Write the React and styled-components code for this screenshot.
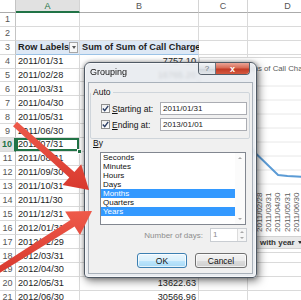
import React from 'react';
import styled, { createGlobalStyle } from 'styled-components';

const GlobalStyle = createGlobalStyle`
  html, body { margin: 0; padding: 0; background: #fff; }
  body { font-family: "Liberation Sans", Arial, sans-serif; overflow: hidden; }
  * { box-sizing: border-box; }
`;

const Page = styled.div`
  position: relative;
  width: 301px;
  height: 300px;
  overflow: hidden;
  background: #fff;
`;

/* ---------- spreadsheet ---------- */
const Sheet = styled.div`
  display: grid;
  grid-template-columns: 16px 64px 119px 49px 80px;
  grid-template-rows: 13px repeat(21, 13.9px);
  font-size: 9.2px;
  color: #1e1e1e;
`;

const Corner = styled.div`
  background: #fff;
  border-right: 1px solid #c4c4c4;
  border-bottom: 1px solid #ababab;
`;

const ColHead = styled.div`
  display: flex;
  align-items: center;
  justify-content: center;
  font-size: 9px;
  color: ${p => (p.$active ? '#217346' : '#555')};
  background: ${p => (p.$active ? '#e1e1e1' : '#fff')};
  border-right: 1px solid #d4d4d4;
  border-bottom: ${p => (p.$active ? '2px solid #217346' : '1px solid #ababab')};
`;

const RowHead = styled.div`
  display: flex;
  align-items: center;
  justify-content: center;
  font-size: 9px;
  color: ${p => (p.$active ? '#217346' : '#555')};
  font-weight: ${p => (p.$active ? 700 : 400)};
  background: ${p => (p.$active ? '#e1e1e1' : '#fff')};
  border-right: ${p => (p.$active ? '2px solid #217346' : '1px solid #c4c4c4')};
  border-bottom: 1px solid #dadada;
`;

const Cell = styled.div`
  position: relative;
  display: flex;
  align-items: center;
  justify-content: ${p => (p.$right ? 'flex-end' : 'flex-start')};
  padding: 0 2px;
  white-space: nowrap;
  font-weight: ${p => (p.$pivot ? 700 : 400)};
  background: ${p => (p.$pivot ? '#dde8f5' : '#fff')};
  border-right: 1px solid #dadada;
  border-bottom: ${p => (p.$pivot ? '1px solid #9bc2e6' : '1px solid #dadada')};
  box-shadow: ${p => (p.$selected ? 'inset 0 0 0 2px #217346' : 'none')};
`;

const FilterButton = styled.span`
  margin-left: auto;
  margin-right: -1px;
  width: 11px;
  height: 11px;
  border: 1px solid #a6a6a6;
  background: #f7f7f7;
  display: flex;
  align-items: center;
  justify-content: center;
  &::after {
    content: '';
    border-top: 3px solid #555;
    border-left: 2.5px solid transparent;
    border-right: 2.5px solid transparent;
  }
`;

const FillHandle = styled.span`
  position: absolute;
  right: -3px;
  bottom: -3px;
  width: 5px;
  height: 5px;
  background: #217346;
  border: 1px solid #fff;
  z-index: 1;
`;

/* ---------- chart ---------- */
const Chart = styled.div`
  position: absolute;
  left: 199px;
  top: 57px;
  width: 120px;
  height: 196px;
  background: #fff;
  border: 1px solid #d9d9d9;
  display: flex;
  flex-direction: column;
  z-index: 2;
`;

const ChartTitle = styled.div`
  height: 21px;
  line-height: 21px;
  padding-left: 15px;
  font-size: 7.8px;
  color: #595959;
  white-space: nowrap;
`;

const Plot = styled.svg`
  display: block;
  width: 118px;
  height: 108px;
`;

const Ticks = styled.div`
  display: flex;
  height: 47px;
  padding-left: 45.5px;
`;

const Tick = styled.span`
  flex: 0 0 9.3px;
  height: 100%;
  writing-mode: vertical-rl;
  transform: rotate(180deg);
  font-size: 8px;
  line-height: 9.3px;
  color: #595959;
  padding-top: 2px;
  white-space: nowrap;
`;

const FieldButton = styled.div`
  margin: 2px 0 0 56px;
  height: 13px;
  width: 60px;
  display: flex;
  align-items: center;
  gap: 3px;
  padding-left: 3px;
  background: #e9e9e9;
  border: 1px solid #d2d2d2;
  font-size: 8px;
  font-weight: 700;
  color: #333;
  white-space: nowrap;
  &::after {
    content: '';
    border-top: 3px solid #333;
    border-left: 2.5px solid transparent;
    border-right: 2.5px solid transparent;
  }
`;

/* ---------- dialog ---------- */
const Dialog = styled.div`
  position: absolute;
  left: 84px;
  top: 62px;
  width: 173px;
  height: 216px;
  border: 1px solid #4f5964;
  border-radius: 6px 6px 4px 4px;
  background: rgba(230, 234, 239, 0.86);
  backdrop-filter: blur(1.6px);
  box-shadow: inset 0 0 0 1px rgba(255, 255, 255, 0.6), 2px 3px 8px rgba(0, 0, 0, 0.5),
    0 0 4px rgba(0, 0, 0, 0.3);
  display: flex;
  flex-direction: column;
  padding: 0 3px 3px;
  z-index: 3;
  font-family: "Liberation Sans", Arial, sans-serif;
`;

const TitleBar = styled.div`
  height: 19px;
  display: flex;
  align-items: flex-start;
  justify-content: space-between;
  padding-left: 2px;
`;

const Title = styled.span`
  font-size: 9px;
  line-height: 19px;
  color: #111;
`;

const Caption = styled.div`
  display: flex;
  margin-right: 3px;
  height: 12px;
  border: 1px solid #56606b;
  border-top: none;
  border-radius: 0 0 4px 4px;
  overflow: hidden;
`;

const CaptionButton = styled.span`
  width: ${p => (p.$close ? '33px' : '17px')};
  display: flex;
  align-items: center;
  justify-content: center;
  font-size: ${p => (p.$close ? '9px' : '8px')};
  font-weight: ${p => (p.$close ? 700 : 400)};
  color: ${p => (p.$close ? '#fff' : '#6b7580')};
  background: ${p =>
    p.$close
      ? 'linear-gradient(#eaa597 0%, #d86a55 45%, #c23b26 55%, #d4593f 100%)'
      : 'linear-gradient(#f4f6f8 0%, #dde2e7 50%, #cfd5db 51%, #e2e6ea 100%)'};
  border-right: ${p => (p.$close ? 'none' : '1px solid #6a7480')};
`;

const Client = styled.div`
  flex: 1;
  display: flex;
  flex-direction: column;
  background: #f0f0f0;
  border: 1px solid #a9b1ba;
`;

const GroupBox = styled.fieldset`
  margin: 4px 2px 0 1px;
  padding: 0;
  border: 1px solid #cfd5db;
  border-radius: 2px;
  min-width: 0;
`;

const Legend = styled.legend`
  margin-left: 0;
  padding: 0 2px;
  font-size: 8.5px;
  line-height: 10px;
  color: #111;
`;

const GroupRows = styled.div`
  display: flex;
  flex-direction: column;
  gap: 3px;
  padding: 5px 2px 7px 10px;
`;

const FieldRow = styled.div`
  display: flex;
  align-items: center;
  height: 13px;
`;

const CheckBox = styled.span`
  width: 9px;
  height: 9px;
  border: 1px solid #8e8f8f;
  background: linear-gradient(#f0f0f0, #fdfdfd);
  display: flex;
  align-items: center;
  justify-content: center;
`;

const FieldLabel = styled.span`
  flex: 1;
  margin-left: 2px;
  font-size: 8.5px;
  color: #111;
`;

const TextBox = styled.div`
  flex: 0 0 87px;
  height: 13px;
  border: 1px solid #abadb3;
  background: #fff;
  font-size: 8px;
  line-height: 11px;
  padding-left: 2px;
  color: #222;
`;

const ByLabel = styled.div`
  height: 8px;
  line-height: 8px;
  padding-left: 4px;
  font-size: 8.5px;
  color: #111;
`;

const ListBox = styled.div`
  margin: 5px 6px 0 11px;
  height: 73px;
  display: flex;
  border: 1px solid #828790;
  background: #fff;
`;

const Items = styled.div`
  flex: 1;
  display: flex;
  flex-direction: column;
`;

const Item = styled.div`
  height: 9px;
  line-height: 9px;
  padding-left: 2px;
  font-size: 8px;
  color: ${p => (p.$selected ? '#fff' : '#111')};
  background: ${p => (p.$selected ? '#3399ff' : 'transparent')};
`;

const ScrollBar = styled.div`
  flex: 0 0 10px;
  display: flex;
  flex-direction: column;
  justify-content: space-between;
  align-items: center;
  padding: 4px 0;
  background: #fbfbfb;
`;

const Arrow = styled.span`
  border-left: 2.5px solid transparent;
  border-right: 2.5px solid transparent;
  ${p => (p.$down ? 'border-top: 2.5px solid #a8a8a8;' : 'border-bottom: 2.5px solid #a8a8a8;')}
`;

const DaysRow = styled.div`
  margin-top: 3px;
  height: 14px;
  display: flex;
  align-items: center;
  justify-content: flex-end;
  gap: 7px;
  padding-right: 5px;
`;

const DaysLabel = styled.span`
  font-size: 8px;
  color: #8d8d8d;
`;

const SpinBox = styled.div`
  width: 37px;
  height: 14px;
  display: flex;
  border: 1px solid #c9cdd2;
  background: #fff;
`;

const SpinValue = styled.span`
  flex: 1;
  font-size: 8px;
  line-height: 12px;
  padding-left: 2px;
  color: #8d8d8d;
`;

const SpinButtons = styled.span`
  flex: 0 0 9px;
  display: flex;
  flex-direction: column;
  justify-content: space-around;
  align-items: center;
  border-left: 1px solid #dcdcdc;
  background: #f6f6f6;
`;

const ButtonRow = styled.div`
  margin-top: 11px;
  height: 15px;
  display: flex;
  justify-content: flex-end;
  gap: 8px;
  padding-right: 5px;
`;

const Button = styled.div`
  width: ${p => (p.$w)}px;
  height: 15px;
  display: flex;
  align-items: center;
  justify-content: center;
  font-size: 8.5px;
  color: #111;
  border-radius: 3px;
  border: 1px solid ${p => (p.$default ? '#3c7fb1' : '#707070')};
  background: ${p =>
    p.$default
      ? 'linear-gradient(#eaf6fd 0%, #d9f0fc 50%, #bee6fd 51%, #a7d9f5 100%)'
      : 'linear-gradient(#f2f2f2 0%, #ebebeb 50%, #dddddd 51%, #cfcfcf 100%)'};
  box-shadow: inset 0 0 0 1px rgba(255, 255, 255, 0.7);
`;

/* ---------- arrows overlay ---------- */
const Overlay = styled.svg`
  position: absolute;
  left: 0;
  top: 0;
  width: 301px;
  height: 300px;
  pointer-events: none;
  z-index: 5;
`;

function arrowPoints(x0, y0, x1, y1, w = 3.8, h = 14, L = 23) {
  const dx = x1 - x0;
  const dy = y1 - y0;
  const len = Math.hypot(dx, dy);
  const ux = dx / len;
  const uy = dy / len;
  const px = -uy;
  const py = ux;
  const bx = x1 - ux * L;
  const by = y1 - uy * L;
  const pts = [
    [x0 + px * w * 0.8, y0 + py * w * 0.8],
    [bx + px * w, by + py * w],
    [bx + px * h, by + py * h],
    [x1, y1],
    [bx - px * h, by - py * h],
    [bx - px * w, by - py * w],
    [x0 - px * w * 0.8, y0 - py * w * 0.8],
  ];
  return pts.map(p => p.map(v => v.toFixed(1)).join(',')).join(' ');
}

const colA = [
  '', '', 'Row Labels', '2011/01/31', '2011/02/28', '2011/03/31', '2011/04/30', '2011/05/31',
  '2011/06/30', '2011/07/31', '2011/08/31', '2011/09/30', '2011/10/31', '2011/11/30',
  '2011/12/31', '2012/01/31', '2012/02/29', '2012/03/31', '2012/04/30', '2012/05/31', '2012/06/30',
];
const colB = [
  '', '', 'Sum of Sum of Call Charge', '7757.10', '16765.20', '18342.55', '21054.80', '19876.34',
  '22410.67', '20987.12', '24310.45', '23098.76', '25671.30', '26890.14', '27543.91',
  '15234.08', '14876.52', '17321.40', '16450.77', '13622.63', '30566.96',
];

const units = ['Seconds', 'Minutes', 'Hours', 'Days', 'Months', 'Quarters', 'Years'];
const selectedUnits = ['Months', 'Years'];
const ticks = ['2011/01/31', '2011/02/28', '2011/03/31', '2011/04/30', '2011/05/31', '2011/06/30', '2011/07/31'];
const gridYs = [7, 21, 35, 49, 63, 77, 91, 105];
const linePts = [
  [40, 60], [50.2, 69], [59.5, 78], [68.8, 87], [78.1, 96], [87.4, 97], [96.7, 97.5], [106, 98],
];

export default function App() {
  return (
    <>
      <GlobalStyle />
      <Page>
        <Sheet>
          <Corner />
          {['A', 'B', 'C', 'D'].map(c => (
            <ColHead key={c} $active={c === 'A'}>{c}</ColHead>
          ))}
          {colA.map((a, i) => (
            <React.Fragment key={i}>
              <RowHead $active={i === 9}>{i + 1}</RowHead>
              <Cell $pivot={i === 2} $selected={i === 9}>
                {a}
                {i === 2 && <FilterButton />}
                {i === 9 && <FillHandle />}
              </Cell>
              <Cell $pivot={i === 2} $right={i !== 2}>{colB[i]}</Cell>
              <Cell />
              <Cell />
            </React.Fragment>
          ))}
        </Sheet>

        <Chart>
          <ChartTitle>Sum of Sums of Call Charge</ChartTitle>
          <Plot viewBox="0 0 118 108">
            {gridYs.map(y => (
              <line key={y} x1="0" x2="118" y1={y} y2={y} stroke="#e8e8e8" strokeWidth="1" />
            ))}
            <polyline
              points={linePts.map(p => p.join(',')).join(' ')}
              fill="none"
              stroke="#5b9bd5"
              strokeWidth="2"
              strokeLinejoin="round"
            />
          </Plot>
          <Ticks>
            {ticks.map(t => (
              <Tick key={t}>{t}</Tick>
            ))}
          </Ticks>
          <FieldButton>with year</FieldButton>
        </Chart>

        <Dialog>
          <TitleBar>
            <Title>Grouping</Title>
            <Caption>
              <CaptionButton>?</CaptionButton>
              <CaptionButton $close>x</CaptionButton>
            </Caption>
          </TitleBar>
          <Client>
            <GroupBox>
              <Legend>Auto</Legend>
              <GroupRows>
                <FieldRow>
                  <CheckBox>
                    <svg width="7" height="7" viewBox="0 0 7 7">
                      <path d="M0.8 3.6 L2.7 5.6 L6.2 0.9" fill="none" stroke="#2c3f66" strokeWidth="1.4" />
                    </svg>
                  </CheckBox>
                  <FieldLabel><u>S</u>tarting at:</FieldLabel>
                  <TextBox>2011/01/31</TextBox>
                </FieldRow>
                <FieldRow>
                  <CheckBox>
                    <svg width="7" height="7" viewBox="0 0 7 7">
                      <path d="M0.8 3.6 L2.7 5.6 L6.2 0.9" fill="none" stroke="#2c3f66" strokeWidth="1.4" />
                    </svg>
                  </CheckBox>
                  <FieldLabel><u>E</u>nding at:</FieldLabel>
                  <TextBox>2013/01/01</TextBox>
                </FieldRow>
              </GroupRows>
            </GroupBox>
            <ByLabel><u>B</u>y</ByLabel>
            <ListBox>
              <Items>
                {units.map(u => (
                  <Item key={u} $selected={selectedUnits.includes(u)}>{u}</Item>
                ))}
              </Items>
              <ScrollBar>
                <Arrow />
                <Arrow $down />
              </ScrollBar>
            </ListBox>
            <DaysRow>
              <DaysLabel>Number of days:</DaysLabel>
              <SpinBox>
                <SpinValue>1</SpinValue>
                <SpinButtons>
                  <Arrow />
                  <Arrow $down />
                </SpinButtons>
              </SpinBox>
            </DaysRow>
            <ButtonRow>
              <Button $w={50} $default>OK</Button>
              <Button $w={52}>Cancel</Button>
            </ButtonRow>
          </Client>
        </Dialog>

        <Overlay viewBox="0 0 301 300">
          <defs>
            <linearGradient id="redArrow" x1="0" y1="0" x2="0" y2="1">
              <stop offset="0" stopColor="#ee5a4a" />
              <stop offset="1" stopColor="#d8392e" />
            </linearGradient>
          </defs>
          <polygon points={arrowPoints(15, 124, 89, 190)} fill="url(#redArrow)" />
          <polygon points={arrowPoints(-3, 271, 92, 211)} fill="url(#redArrow)" />
        </Overlay>
      </Page>
    </>
  );
}
